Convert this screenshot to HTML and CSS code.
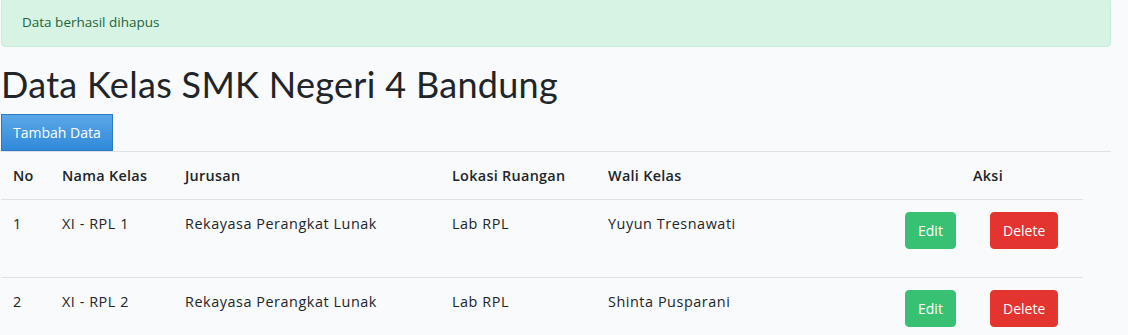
FILE: index.html
```html
<!DOCTYPE html>
<html lang="id">
<head>
<meta charset="utf-8">
<title>Data Kelas SMK Negeri 4 Bandung</title>
<link rel="stylesheet" href="styles.css">
</head>
<body>
<div class="container">
  <div class="alert">Data berhasil dihapus</div>
  <h1 class="title">Data Kelas SMK Negeri 4 Bandung</h1>
  <a class="btn btn-primary" href="#">Tambah Data</a>
  <div class="table-wrap">
    <table class="table">
      <colgroup>
        <col class="c-no"><col class="c-nama"><col class="c-jur"><col class="c-lok"><col class="c-wali"><col class="c-edit"><col class="c-del">
      </colgroup>
      <thead>
        <tr>
          <th>No</th><th>Nama Kelas</th><th>Jurusan</th><th>Lokasi Ruangan</th><th>Wali Kelas</th><th colspan="2" class="center">Aksi</th>
        </tr>
      </thead>
      <tbody>
        <tr>
          <td>1</td><td>XI - RPL 1</td><td>Rekayasa Perangkat Lunak</td><td>Lab RPL</td><td>Yuyun Tresnawati</td>
          <td><a class="btn btn-success" href="#">Edit</a></td>
          <td><form class="del-form"><button type="button" class="btn btn-danger">Delete</button></form></td>
        </tr>
        <tr>
          <td>2</td><td>XI - RPL 2</td><td>Rekayasa Perangkat Lunak</td><td>Lab RPL</td><td>Shinta Pusparani</td>
          <td><a class="btn btn-success" href="#">Edit</a></td>
          <td><form class="del-form"><button type="button" class="btn btn-danger">Delete</button></form></td>
        </tr>
      </tbody>
    </table>
  </div>
</div>
</body>
</html>
```
FILE: styles.css
```css
html, body {
  margin: 0;
  padding: 0;
}
body {
  background: #f8fafc;
  font-family: "Open Sans", "Lato", sans-serif;
  font-size: 14.4px;
  letter-spacing: 0.3px;
  line-height: 23px;
  color: #212529;
}
.container {
  width: 1110px;
  margin-left: 1px;
}
.alert {
  margin-top: -2px;
  padding: 12px 20px;
  background: #d7f3e3;
  border: 1px solid #c7eedc;
  border-radius: 4px;
  color: #1d643b;
  font-size: 13.5px;
  letter-spacing: 0;
}
.title {
  margin: 16px 0 8px;
  font-family: "Lato", "Open Sans", sans-serif;
  font-size: 36px;
  font-weight: 400;
  letter-spacing: 0.3px;
  line-height: 43px;
  color: #212529;
}
.btn {
  display: inline-block;
  box-sizing: border-box;
  padding: 6px 12px;
  font-family: inherit;
  font-size: 14px;
  letter-spacing: 0;
  line-height: 23px;
  border: 1px solid transparent;
  border-radius: 4px;
  color: #fff;
  text-decoration: none;
  cursor: pointer;
}
.btn-primary {
  padding: 6px 11px;
  background: linear-gradient(#5ba8e8, #3089d9);
  border-color: #2d78bf;
  border-radius: 0;
}
.btn-success {
  background: #38c172;
  border-color: #38c172;
}
.btn-danger {
  background: #e3342f;
  border-color: #e3342f;
}
.table-wrap {
  border-top: 1px solid #dee2e6;
}
.table {
  width: 1082px;
  border-collapse: collapse;
  table-layout: fixed;
}
.c-no { width: 49px; }
.c-nama { width: 123px; }
.c-jur { width: 267px; }
.c-lok { width: 156px; }
.c-wali { width: 297px; }
.c-edit { width: 85px; }
.c-del { width: 105px; }
.table th, .table td {
  padding: 12px;
  text-align: left;
  vertical-align: top;
  border-top: 1px solid #dee2e6;
}
.table td {
  letter-spacing: 0.55px;
}
.table thead th {
  border-top: none;
  font-weight: 600;
}
.table th.center {
  text-align: center;
}
.del-form {
  margin: 0 0 16px;
}
```
